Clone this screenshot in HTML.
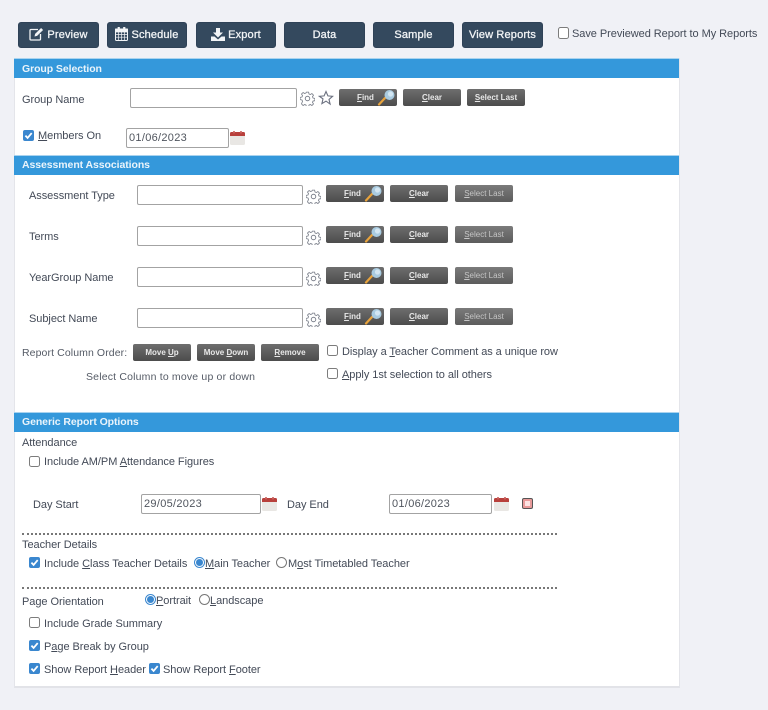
<!DOCTYPE html>
<html><head><meta charset="utf-8"><title>Report</title>
<style>
html,body{margin:0;padding:0}
body{width:768px;height:710px;background:#f0f1f6;position:relative;overflow:hidden;font-family:"Liberation Sans",sans-serif;font-size:11px;color:#3f4652}
.a{position:absolute}
.t{position:absolute;white-space:nowrap;line-height:14px;height:14px;letter-spacing:-.05px;color:#434a57;margin-top:1px}
.top{position:absolute;top:22px;height:26px;background:#34495e;border-radius:3px;color:#f2f4f6;font-size:11px;line-height:25px;text-align:center;letter-spacing:.15px;-webkit-text-stroke:.3px #f2f4f6;white-space:nowrap;border:1px solid #2f4257;box-sizing:border-box}
.top svg{vertical-align:-3px;margin-right:3px;-webkit-text-stroke:0}
.hd{position:absolute;left:14px;width:665px;height:20px;background:#3498db;color:#eaf4fb;font-weight:bold;font-size:10.5px;line-height:20px;text-indent:8px;letter-spacing:-.08px;border-top:1px solid #a9d3ef;box-sizing:border-box}
.in{position:absolute;background:#fff;border:1px solid #a3a3a3;border-radius:2px;box-sizing:border-box;height:20px;font-size:11px;line-height:19px;padding-left:2px;color:#50555e;letter-spacing:.3px}
.b{position:absolute;width:58px;height:17px;background:linear-gradient(#6e6e6e,#4c4c4c);border-radius:2px;color:#e8e8e8;font-weight:bold;font-size:8px;line-height:17px;text-align:center;white-space:nowrap}
.b.d{background:linear-gradient(#7b7b7b,#5c5c5c);color:#c6c6c6;font-weight:normal}
.b svg{position:absolute;right:0;top:0}
.b.f{text-indent:-5px}
.c{position:absolute;width:11px;height:11px;border:1px solid #7c7c7c;border-radius:2.5px;background:#fff;box-sizing:border-box}
.k{position:absolute;width:11px;height:11px;border-radius:2px;background:#3a87cf}
.k svg{display:block}
.r{position:absolute;width:11px;height:11px;border:1px solid #777;border-radius:50%;background:#fff;box-sizing:border-box}
.r.on{border:1.5px solid #3a87cf;background:radial-gradient(circle,#3a87cf 0 3.2px,#fff 3.8px)}
.dot{position:absolute;left:22px;width:535px;border-top:2px dotted #777;height:0}
.g{position:absolute;width:15px;height:15px}
.cal{position:absolute;width:15px;height:14px}
u{text-underline-offset:1px}
</style></head><body>
<svg width="0" height="0" style="position:absolute">
<symbol id="gear" viewBox="0 0 16 16"><circle cx="8" cy="8" r="2.4" fill="none" stroke="#7a7f8a" stroke-width="1"/><path d="M6.800 1.200h2.400l.4 2 1.400.6 1.700-1.100 1.700 1.700-1.100 1.700.6 1.400 2 .4v2.400l-2 .4-.6 1.400 1.100 1.700-1.700 1.700-1.700-1.100-1.400.6-.4 2H6.800l-.4-2-1.400-.6-1.700 1.100-1.700-1.700L2.700 11l-.6-1.400-2-.4V6.800l2-.4.6-1.400-1.100-1.700 1.700-1.700L5 2.700l1.400-.6z" fill="none" stroke="#7a7f8a" stroke-width=".9"/></symbol>
<symbol id="mag" viewBox="0 0 20 17"><path d="M2 15.500L8 9" stroke="#e8a33c" stroke-width="2.200" stroke-linecap="round"/><circle cx="12.500" cy="6" r="5" fill="#a9cbe0"/><circle cx="13.500" cy="5" r="2.600" fill="#d3e6f2"/></symbol>
<symbol id="calr" viewBox="0 0 15 14"><rect x="0" y="1" width="15" height="13" rx="1.500" fill="#e9e7e4"/><path d="M0 5V2.500A1.500 1.500 0 0 1 1.500 1H13.500A1.500 1.500 0 0 1 15 2.500V5z" fill="#b8403c"/><rect x="3" y="0" width="2" height="2.500" rx=".8" fill="#c9605c"/><rect x="10" y="0" width="2" height="2.500" rx=".8" fill="#c9605c"/></symbol>
<symbol id="chk" viewBox="0 0 11 11"><path d="M2.400 5.600L4.600 7.900 8.700 3.100" fill="none" stroke="#fff" stroke-width="1.800"/></symbol>
</svg>

<div class="top" style="left:18px;width:81px"><svg width="15" height="14" viewBox="0 0 15 14"><path d="M9 2.500H2A1 1 0 0 0 1 3.500V12a1 1 0 0 0 1 1h8.500a1 1 0 0 0 1-1V7" fill="none" stroke="#f2f4f6" stroke-width="1.300"/><path d="M5.500 9.500l.6-2.600 6-5.900 2 2-6 5.900z" fill="#f2f4f6"/></svg>Preview</div>
<div class="top" style="left:107px;width:80px"><svg width="13" height="14" viewBox="0 0 13 14"><rect x=".5" y="2" width="12" height="11.500" rx="1" fill="none" stroke="#f2f4f6"/><path d="M0 2h13v3H0zM3 0h1.500v3H3zM8.500 0H10v3H8.500zM3.500 5v8M6.500 5v8M9.500 5v8M1 7.500h11M1 10.200h11" fill="#f2f4f6" stroke="#f2f4f6" stroke-width=".7"/></svg>Schedule</div>
<div class="top" style="left:196px;width:80px"><svg width="14" height="13" viewBox="0 0 14 13"><path d="M5 0h4v4.500h3L7 9.500 2 4.500h3z" fill="#f2f4f6"/><path d="M0 8.500h3.500L7 11.500l3.500-3H14V13H0z" fill="#f2f4f6"/></svg>Export</div>
<div class="top" style="left:284px;width:81px">Data</div>
<div class="top" style="left:373px;width:81px">Sample</div>
<div class="top" style="left:462px;width:81px">View Reports</div>
<div class="c" style="left:558px;top:27px;width:11px;height:12px"></div>
<div class="t" style="left:572px;top:26px">Save Previewed Report to My Reports</div>

<div class="a" style="left:14px;top:58px;width:666px;height:630px;background:#fff;border-right:1px solid #e4e5ea;border-left:1px solid #e4e5ea;border-bottom:2px solid #e2e3e8;box-sizing:border-box"></div>
<div class="hd" style="top:58px">Group Selection</div>
<div class="hd" style="top:155px;height:19.500px;line-height:18px">Assessment Associations</div>
<div class="hd" style="top:412px;height:19.500px;line-height:18px">Generic Report Options</div>

<div class="t" style="left:22px;top:92px">Group Name</div>
<div class="in" style="left:130px;top:88px;width:167px"></div>
<svg class="g" style="left:300px;top:91px"><use href="#gear"/></svg>
<svg class="a" style="left:318px;top:90px" width="16" height="16" viewBox="0 0 16 16"><path d="M8 1.500l1.900 4.400 4.700.4-3.600 3.100 1.100 4.700L8 11.100l-4.100 2.500L5 8.900 1.400 6.300l4.700-.4z" fill="none" stroke="#6c7180" stroke-width="1.100"/></svg>
<div class="b f" style="left:339px;top:89px"><u>F</u>ind<svg width="20" height="17"><use href="#mag"/></svg></div>
<div class="b" style="left:403px;top:89px"><u>C</u>lear</div>
<div class="b" style="left:467px;top:89px"><u>S</u>elect Last</div>

<div class="k" style="left:23px;top:130px"><svg width="11" height="11"><use href="#chk"/></svg></div>
<div class="t" style="left:38px;top:128px"><u>M</u>embers On</div>
<div class="in" style="left:126px;top:128px;width:103px">01/06/2023</div>
<svg class="cal" style="left:230px;top:131px"><use href="#calr"/></svg>

<div class="t" style="left:29px;top:188px">Assessment Type</div>
<div class="in" style="left:137px;top:185px;width:166px"></div>
<svg class="g" style="left:306px;top:189px"><use href="#gear"/></svg>
<div class="b f" style="left:326px;top:185px"><u>F</u>ind<svg width="20" height="17"><use href="#mag"/></svg></div>
<div class="b" style="left:390px;top:185px"><u>C</u>lear</div>
<div class="b d" style="left:455px;top:185px"><u>S</u>elect Last</div>

<div class="t" style="left:29px;top:229px">Terms</div>
<div class="in" style="left:137px;top:226px;width:166px"></div>
<svg class="g" style="left:306px;top:230px"><use href="#gear"/></svg>
<div class="b f" style="left:326px;top:226px"><u>F</u>ind<svg width="20" height="17"><use href="#mag"/></svg></div>
<div class="b" style="left:390px;top:226px"><u>C</u>lear</div>
<div class="b d" style="left:455px;top:226px"><u>S</u>elect Last</div>

<div class="t" style="left:29px;top:270px">YearGroup Name</div>
<div class="in" style="left:137px;top:267px;width:166px"></div>
<svg class="g" style="left:306px;top:271px"><use href="#gear"/></svg>
<div class="b f" style="left:326px;top:267px"><u>F</u>ind<svg width="20" height="17"><use href="#mag"/></svg></div>
<div class="b" style="left:390px;top:267px"><u>C</u>lear</div>
<div class="b d" style="left:455px;top:267px"><u>S</u>elect Last</div>

<div class="t" style="left:29px;top:311px">Subject Name</div>
<div class="in" style="left:137px;top:308px;width:166px"></div>
<svg class="g" style="left:306px;top:312px"><use href="#gear"/></svg>
<div class="b f" style="left:326px;top:308px"><u>F</u>ind<svg width="20" height="17"><use href="#mag"/></svg></div>
<div class="b" style="left:390px;top:308px"><u>C</u>lear</div>
<div class="b d" style="left:455px;top:308px"><u>S</u>elect Last</div>

<div class="t" style="left:22px;top:345px;font-size:10.500px;letter-spacing:.1px;color:#555b66">Report Column Order:</div>
<div class="b" style="left:133px;top:344px">Move <u>U</u>p</div>
<div class="b" style="left:197px;top:344px">Move <u>D</u>own</div>
<div class="b" style="left:261px;top:344px"><u>R</u>emove</div>
<div class="c" style="left:327px;top:345px"></div>
<div class="t" style="left:342px;top:344px;letter-spacing:-.07px">Display a <u>T</u>eacher Comment as a unique row</div>
<div class="c" style="left:327px;top:368px"></div>
<div class="t" style="left:342px;top:367px"><u>A</u>pply 1st selection to all others</div>
<div class="t" style="left:86px;top:369px;font-size:10.500px;letter-spacing:.18px;color:#555b66">Select Column to move up or down</div>

<div class="t" style="left:22px;top:435px">Attendance</div>
<div class="c" style="left:29px;top:456px"></div>
<div class="t" style="left:44px;top:454px">Include AM/PM <u>A</u>ttendance Figures</div>
<div class="t" style="left:33px;top:497px">Day Start</div>
<div class="in" style="left:141px;top:494px;width:120px">29/05/2023</div>
<svg class="cal" style="left:262px;top:497px"><use href="#calr"/></svg>
<div class="t" style="left:287px;top:497px">Day End</div>
<div class="in" style="left:389px;top:494px;width:103px">01/06/2023</div>
<svg class="cal" style="left:494px;top:497px"><use href="#calr"/></svg>
<svg class="a" style="left:522px;top:498px" width="11" height="11" viewBox="0 0 11 11"><rect x=".5" y=".5" width="10" height="10" rx="1.500" fill="#e89a9a" stroke="#555"/><rect x="3" y="3" width="5" height="5" fill="#fbe3e3"/></svg>

<div class="dot" style="top:533px"></div>
<div class="t" style="left:22px;top:537px">Teacher Details</div>
<div class="k" style="left:29px;top:557px"><svg width="11" height="11"><use href="#chk"/></svg></div>
<div class="t" style="left:44px;top:556px">Include <u>C</u>lass Teacher Details</div>
<div class="r on" style="left:194px;top:557px"></div>
<div class="t" style="left:205px;top:556px"><u>M</u>ain Teacher</div>
<div class="r" style="left:276px;top:557px"></div>
<div class="t" style="left:288px;top:556px">M<u>o</u>st Timetabled Teacher</div>

<div class="dot" style="top:587px"></div>
<div class="t" style="left:22px;top:594px">Page Orientation</div>
<div class="r on" style="left:145px;top:594px"></div>
<div class="t" style="left:156px;top:593px"><u>P</u>ortrait</div>
<div class="r" style="left:199px;top:594px"></div>
<div class="t" style="left:210px;top:593px"><u>L</u>andscape</div>

<div class="c" style="left:29px;top:617px"></div>
<div class="t" style="left:44px;top:616px">Include Grade Summary</div>
<div class="k" style="left:29px;top:640px"><svg width="11" height="11"><use href="#chk"/></svg></div>
<div class="t" style="left:44px;top:639px">P<u>a</u>ge Break by Group</div>
<div class="k" style="left:29px;top:663px"><svg width="11" height="11"><use href="#chk"/></svg></div>
<div class="t" style="left:44px;top:662px">Show Report <u>H</u>eader</div>
<div class="k" style="left:149px;top:663px"><svg width="11" height="11"><use href="#chk"/></svg></div>
<div class="t" style="left:163px;top:662px">Show Report <u>F</u>ooter</div>
</body></html>
